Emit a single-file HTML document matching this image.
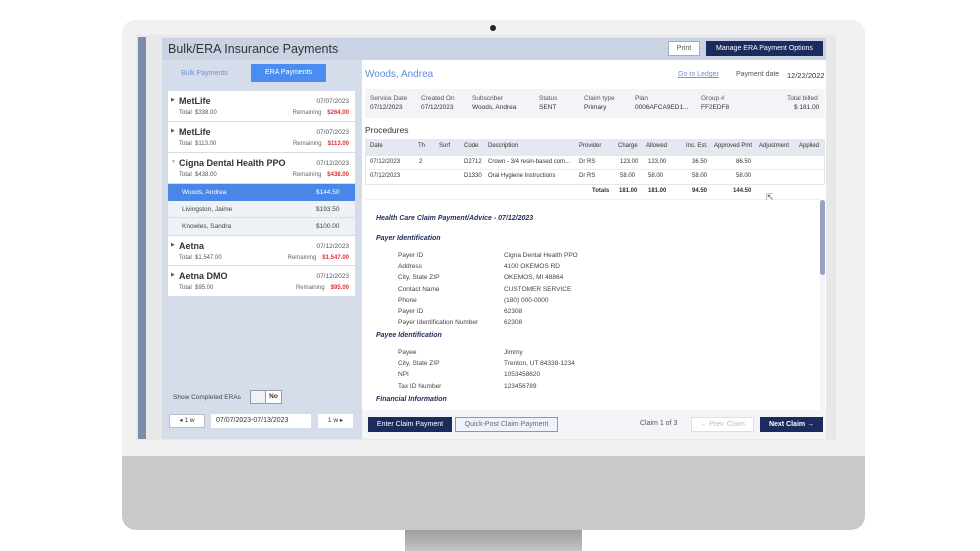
<!DOCTYPE html>
<html><head><meta charset="utf-8"><style>
*{margin:0;padding:0;box-sizing:border-box}
body{width:980px;height:551px;background:#fff;position:relative;overflow:hidden;font-family:"Liberation Sans",sans-serif;color:#333}
.a{position:absolute}
.t{position:absolute;white-space:nowrap}
.card{position:absolute;left:168px;width:187px;background:#fff}
.card .n{position:absolute;left:11px;top:5px;font-size:9px;font-weight:bold;color:#333}
.card .d{position:absolute;right:6px;top:7px;font-size:6.5px;color:#555}
.card .tt{position:absolute;left:11px;top:19px;font-size:6px;color:#555}
.card .r{position:absolute;right:6px;top:19px;font-size:6px;color:#666}
.card .r b{color:#d33;margin-left:6px}
.card .ar{position:absolute;left:3px;top:6px;font-size:5px;color:#556}
.sub{position:absolute;left:168px;width:187px;height:17px;font-size:6.5px;color:#444;background:#eef1f6}
.sub span{position:absolute;top:5px}
.lbl{font-size:6.5px;color:#555}
.th{position:absolute;top:143px;font-size:6px;color:#333}
.td{position:absolute;font-size:6px;color:#333}
.dl{position:absolute;font-size:6.5px;color:#444}
.h{position:absolute;font-size:7px;font-weight:bold;font-style:italic;color:#1e2d5a}
</style></head><body>
<!-- monitor -->
<div class="a" style="left:405px;top:528px;width:177px;height:23px;background:linear-gradient(#9a9a9a,#c4c4c4)"></div>
<div class="a" style="left:122px;top:20px;width:743px;height:510px;border-radius:14px;background:#c9c9c9;overflow:hidden">
 <div class="a" style="left:0;top:0;width:743px;height:436px;background:#f1f1f1"></div>
</div>
<div class="a" style="left:490px;top:25px;width:6px;height:6px;border-radius:50%;background:#222"></div>
<!-- screen -->
<div class="a" style="left:136px;top:35px;width:700px;height:405px;background:#e8e8e8"></div>
<div class="a" style="left:138px;top:37px;width:8px;height:402px;background:#7d8cab"></div>
<div class="a" style="left:162px;top:38px;width:664px;height:22px;background:#c9d3e4"></div>
<div class="t" style="left:168px;top:42px;font-size:12.5px;color:#333">Bulk/ERA Insurance Payments</div>
<div class="a" style="left:668px;top:41px;width:32px;height:15px;background:#fff;border:1px solid #aab;font-size:7px;text-align:center;line-height:13px;color:#555">Print</div>
<div class="a" style="left:706px;top:41px;width:117px;height:15px;background:#1c2b5e;color:#fff;font-size:7px;text-align:center;line-height:15px">Manage ERA Payment Options</div>
<!-- left panel -->
<div class="a" style="left:162px;top:60px;width:200px;height:379px;background:#d6ddea"></div>
<div class="t" style="left:181px;top:70px;font-size:7px;color:#6f8fd8">Bulk Payments</div>
<div class="a" style="left:251px;top:64px;width:75px;height:18px;background:#4b8cf0;color:#fff;font-size:7px;text-align:center;line-height:18px">ERA Payments</div>
<div class="card" style="top:91px;height:30px"><span class="ar">▶</span><span class="n">MetLife</span><span class="d">07/07/2023</span><span class="tt">Total&nbsp; $338.00</span><span class="r">Remaining<b>$264.00</b></span></div>
<div class="card" style="top:122px;height:30px"><span class="ar">▶</span><span class="n">MetLife</span><span class="d">07/07/2023</span><span class="tt">Total&nbsp; $113.00</span><span class="r">Remaining<b>$113.00</b></span></div>
<div class="card" style="top:153px;height:30px"><span class="ar" style="color:#aab">▼</span><span class="n">Cigna Dental Health PPO</span><span class="d">07/12/2023</span><span class="tt">Total&nbsp; $438.00</span><span class="r">Remaining<b>$438.00</b></span></div>
<div class="sub" style="top:184px;background:#4a86e8;color:#fff"><span style="left:14px">Woods, Andrea</span><span style="left:148px">$144.50</span></div>
<div class="sub" style="top:201px;border-bottom:1px solid #dde"><span style="left:14px">Livingston, Jaime</span><span style="left:148px">$193.50</span></div>
<div class="sub" style="top:218px"><span style="left:14px">Knowles, Sandra</span><span style="left:148px">$100.00</span></div>
<div class="card" style="top:236px;height:29px"><span class="ar">▶</span><span class="n">Aetna</span><span class="d">07/12/2023</span><span class="tt">Total&nbsp; $1,547.00</span><span class="r">Remaining<b>$1,547.00</b></span></div>
<div class="card" style="top:266px;height:30px"><span class="ar">▶</span><span class="n">Aetna DMO</span><span class="d">07/12/2023</span><span class="tt">Total&nbsp; $95.00</span><span class="r">Remaining<b>$95.00</b></span></div>
<div class="t" style="left:173px;top:394px;font-size:6.5px;color:#444">Show Completed ERAs</div>
<div class="a" style="left:250px;top:390px;width:32px;height:14px;border:1px solid #99a;background:#eef2fa"></div>
<div class="a" style="left:265px;top:390px;width:17px;height:14px;border:1px solid #99a;background:#fff;font-size:6.5px;font-weight:bold;text-align:center;line-height:12px">No</div>
<div class="a" style="left:169px;top:414px;width:36px;height:14px;background:#fff;border:1px solid #bbc;font-size:6.5px;text-align:center;line-height:12px">◂ 1 w</div>
<div class="a" style="left:211px;top:414px;width:100px;height:14px;background:#fff;font-size:7px;line-height:14px;padding-left:5px">07/07/2023-07/13/2023</div>
<div class="a" style="left:318px;top:414px;width:35px;height:14px;background:#fff;font-size:6.5px;text-align:center;line-height:14px">1 w ▸</div>
<!-- right panel -->
<div class="a" style="left:362px;top:60px;width:464px;height:350px;background:#fff"></div>
<div class="a" style="left:362px;top:410px;width:464px;height:29px;background:#f4f5f8"></div>
<div class="t" style="left:365px;top:69px;font-size:10px;color:#5a8ee0">Woods, Andrea</div>
<div class="t" style="left:678px;top:71px;font-size:7px;color:#6f8fd8;text-decoration:underline">Go to Ledger</div>
<div class="t" style="left:736px;top:71px;font-size:7px;color:#555">Payment date</div>
<div class="t" style="left:787px;top:71px;font-size:7.5px;color:#333">12/22/2022</div>
<div class="a" style="left:365px;top:89px;width:460px;height:29px;background:#f3f4f7"></div>
<div class="t lbl" style="left:370px;top:95px">Service Date</div><div class="t lbl" style="left:370px;top:104px;color:#333">07/12/2023</div>
<div class="t lbl" style="left:421px;top:95px">Created On</div><div class="t lbl" style="left:421px;top:104px;color:#333">07/12/2023</div>
<div class="t lbl" style="left:472px;top:95px">Subscriber</div><div class="t lbl" style="left:472px;top:104px;color:#333">Woods, Andrea</div>
<div class="t lbl" style="left:539px;top:95px">Status</div><div class="t lbl" style="left:539px;top:104px;color:#333">SENT</div>
<div class="t lbl" style="left:584px;top:95px">Claim type</div><div class="t lbl" style="left:584px;top:104px;color:#333">Primary</div>
<div class="t lbl" style="left:635px;top:95px">Plan</div><div class="t lbl" style="left:635px;top:104px;color:#333">0006AFCA9ED1...</div>
<div class="t lbl" style="left:701px;top:95px">Group #</div><div class="t lbl" style="left:701px;top:104px;color:#333">FF2EDF8</div>
<div class="t lbl" style="left:787px;top:95px">Total billed</div><div class="t lbl" style="left:794px;top:104px;color:#333">$ 181.00</div>
<div class="t" style="left:365px;top:125px;font-size:8.5px;color:#333">Procedures</div>
<div class="a" style="left:365px;top:139px;width:460px;height:16px;background:#e3e8f1"></div>
<div class="a" style="left:365px;top:155px;width:460px;height:30px;border:1px solid #e3e6ec;background:#fff"></div>
<div class="a" style="left:366px;top:169px;width:458px;height:1px;background:#eceef2"></div>
<span class="th" style="left:370px">Date</span><span class="th" style="left:418px">Th</span><span class="th" style="left:439px">Surf</span><span class="th" style="left:464px">Code</span><span class="th" style="left:488px">Description</span><span class="th" style="left:579px">Provider</span><span class="th" style="left:618px">Charge</span><span class="th" style="left:646px">Allowed</span><span class="th" style="left:686px">Ins. Est.</span><span class="th" style="left:714px">Approved Pmt</span><span class="th" style="left:759px">Adjustment</span><span class="th" style="left:799px">Applied</span>
<span class="td" style="left:370px;top:159px">07/12/2023</span><span class="td" style="left:419px;top:159px">2</span><span class="td" style="left:464px;top:159px">D2712</span><span class="td" style="left:488px;top:159px">Crown - 3/4 resin-based com...</span><span class="td" style="left:579px;top:159px">Dr RS</span><span class="td" style="left:620px;top:159px">123.00</span><span class="td" style="left:648px;top:159px">123.00</span><span class="td" style="left:692px;top:159px">36.50</span><span class="td" style="left:736px;top:159px">86.50</span>
<span class="td" style="left:370px;top:173px">07/12/2023</span><span class="td" style="left:464px;top:173px">D1330</span><span class="td" style="left:488px;top:173px">Oral Hygiene Instructions</span><span class="td" style="left:579px;top:173px">Dr RS</span><span class="td" style="left:620px;top:173px">58.00</span><span class="td" style="left:648px;top:173px">58.00</span><span class="td" style="left:692px;top:173px">58.00</span><span class="td" style="left:736px;top:173px">58.00</span>
<span class="td" style="left:592px;top:188px;font-weight:bold">Totals</span><span class="td" style="left:619px;top:188px;font-weight:bold">181.00</span><span class="td" style="left:648px;top:188px;font-weight:bold">181.00</span><span class="td" style="left:692px;top:188px;font-weight:bold">94.50</span><span class="td" style="left:733px;top:188px;font-weight:bold">144.50</span>
<div class="a" style="left:365px;top:199px;width:455px;height:1px;background:#f0f0f3"></div>
<div class="a" style="left:820px;top:200px;width:5px;height:210px;background:#f2f4fa"></div>
<div class="a" style="left:820px;top:200px;width:5px;height:75px;border-radius:3px;background:#97a3c2"></div>
<div class="h" style="left:376px;top:215px">Health Care Claim Payment/Advice - 07/12/2023</div>
<div class="h" style="left:376px;top:235px">Payer Identification</div>
<div class="dl" style="left:398px;top:250px;line-height:11.2px">Payer ID<br>Address<br>City, State ZIP<br>Contact Name<br>Phone<br>Payer ID<br>Payer Identification Number</div>
<div class="dl" style="left:504px;top:250px;line-height:11.2px">Cigna Dental Health PPO<br>4100 OKEMOS RD<br>OKEMOS, MI 48864<br>CUSTOMER SERVICE<br>(180) 000-0000<br>62308<br>62308</div>
<div class="h" style="left:376px;top:332px">Payee Identification</div>
<div class="dl" style="left:398px;top:347px;line-height:11.2px">Payee<br>City, State ZIP<br>NPI<br>Tax ID Number</div>
<div class="dl" style="left:504px;top:347px;line-height:11.2px">Jimmy<br>Trenton, UT 84338-1234<br>1053458620<br>123456789</div>
<div class="h" style="left:376px;top:396px">Financial Information</div>
<div class="a" style="left:368px;top:417px;width:84px;height:15px;background:#1c2b5e;color:#fff;font-size:7px;text-align:center;line-height:15px">Enter Claim Payment</div>
<div class="a" style="left:455px;top:417px;width:103px;height:15px;background:#eef2fa;border:1px solid #8898b8;color:#667;font-size:7px;text-align:center;line-height:13px">Quick-Post Claim Payment</div>
<div class="t" style="left:640px;top:420px;font-size:7px;color:#555">Claim 1 of 3</div>
<div class="a" style="left:691px;top:417px;width:63px;height:15px;background:#fff;border:1px solid #dde;color:#bbc;font-size:7px;text-align:center;line-height:13px">← Prev. Claim</div>
<div class="a" style="left:760px;top:417px;width:63px;height:15px;background:#1c2b5e;color:#fff;font-size:7px;font-weight:bold;text-align:center;line-height:15px">Next Claim →</div>
<div class="t" style="left:766px;top:192px;font-size:9px;color:#666">⇱</div>
</body></html>
